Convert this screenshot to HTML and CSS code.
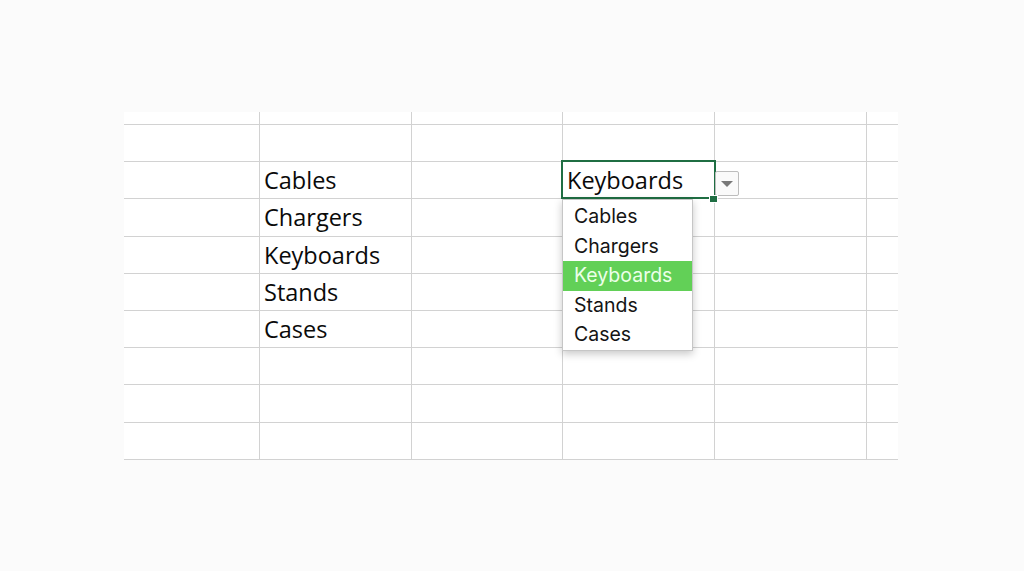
FILE: index.html
```html
<!DOCTYPE html>
<html lang="en">
<head>
    <meta charset="UTF-8">
    <title>Data validation list</title>
    <link rel="stylesheet" href="styles.css">
</head>
<body>
    <div class="sheet">
        <div class="row row-top">
            <div class="cell"></div><div class="cell"></div><div class="cell"></div><div class="cell"></div><div class="cell"></div><div class="cell"></div>
        </div>
        <div class="row">
            <div class="cell"></div><div class="cell"></div><div class="cell"></div><div class="cell"></div><div class="cell"></div><div class="cell"></div>
        </div>
        <div class="row">
            <div class="cell"></div>
            <div class="cell">Cables</div>
            <div class="cell"></div>
            <div class="cell active">
                Keyboards
                <div class="selection"></div>
                <div class="fill-handle"></div>
                <div class="drop-button"><span class="arrow"></span></div>
                <ul class="drop-list">
                    <li>Cables</li>
                    <li>Chargers</li>
                    <li class="selected">Keyboards</li>
                    <li>Stands</li>
                    <li>Cases</li>
                </ul>
            </div>
            <div class="cell"></div>
            <div class="cell"></div>
        </div>
        <div class="row">
            <div class="cell"></div><div class="cell">Chargers</div><div class="cell"></div><div class="cell"></div><div class="cell"></div><div class="cell"></div>
        </div>
        <div class="row">
            <div class="cell"></div><div class="cell">Keyboards</div><div class="cell"></div><div class="cell"></div><div class="cell"></div><div class="cell"></div>
        </div>
        <div class="row">
            <div class="cell"></div><div class="cell">Stands</div><div class="cell"></div><div class="cell"></div><div class="cell"></div><div class="cell"></div>
        </div>
        <div class="row">
            <div class="cell"></div><div class="cell">Cases</div><div class="cell"></div><div class="cell"></div><div class="cell"></div><div class="cell"></div>
        </div>
        <div class="row">
            <div class="cell"></div><div class="cell"></div><div class="cell"></div><div class="cell"></div><div class="cell"></div><div class="cell"></div>
        </div>
        <div class="row">
            <div class="cell"></div><div class="cell"></div><div class="cell"></div><div class="cell"></div><div class="cell"></div><div class="cell"></div>
        </div>
        <div class="row">
            <div class="cell"></div><div class="cell"></div><div class="cell"></div><div class="cell"></div><div class="cell"></div><div class="cell"></div>
        </div>
    </div>
</body>
</html>
```

FILE: styles.css
```css
:root {
    --grid: #d2d2d2;
    --excel-green: #1f6e43;
    --pick-green: #62d057;
}

body {
    margin: 0;
    background-color: #fbfbfb;
    font-family: 'Open Sans', 'Noto Sans', sans-serif;
    color: #0a0a0a;
}

.sheet {
    width: 774px;
    margin: 112px 0 0 124px;
    background-color: #fff;
    border-bottom: 1px solid var(--grid);
}

.row {
    display: grid;
    grid-template-columns: 136px 152px 151px 152px 152px 31px;
    height: 37.2px;
    box-sizing: border-box;
    border-top: 1px solid var(--grid);
}

.row-top {
    height: 12px;
    border-top: none;
}

.cell {
    position: relative;
    padding-left: 4px;
    font-size: 23.5px;
    line-height: 37px;
    white-space: nowrap;
}

.cell:not(:last-child) {
    border-right: 1px solid var(--grid);
}

/* active cell + validation dropdown */
.selection {
    position: absolute;
    left: -2px;
    top: -2px;
    width: 155px;
    height: 39px;
    box-sizing: border-box;
    border: 2px solid var(--excel-green);
}

.fill-handle {
    position: absolute;
    left: 146px;
    top: 33px;
    width: 7px;
    height: 6px;
    background-color: var(--excel-green);
    border: 1px solid #fff;
    z-index: 2;
}

.drop-button {
    position: absolute;
    left: 152px;
    top: 9px;
    width: 24px;
    height: 25px;
    box-sizing: border-box;
    border: 1px solid #bdbdbd;
    border-radius: 2px;
    background-color: #fafafa;
    display: flex;
    align-items: center;
    justify-content: center;
}

.arrow {
    width: 0;
    height: 0;
    border-left: 6px solid transparent;
    border-right: 6px solid transparent;
    border-top: 6px solid #787878;
}

.drop-list {
    position: absolute;
    left: -1px;
    top: 37px;
    width: 131px;
    margin: 0;
    padding: 2px 0 0;
    list-style: none;
    box-sizing: border-box;
    background-color: #fff;
    border: 1px solid #c6c6c6;
    box-shadow: 0 3px 8px rgba(0, 0, 0, 0.22);
    font-family: Inter, 'Noto Sans', sans-serif;
    font-size: 19.5px;
    color: #141414;
    z-index: 3;
}

.drop-list li {
    height: 29.5px;
    line-height: 29.5px;
    padding-left: 11px;
}

.drop-list .selected {
    background-color: var(--pick-green);
    color: #ecffe9;
}
```
